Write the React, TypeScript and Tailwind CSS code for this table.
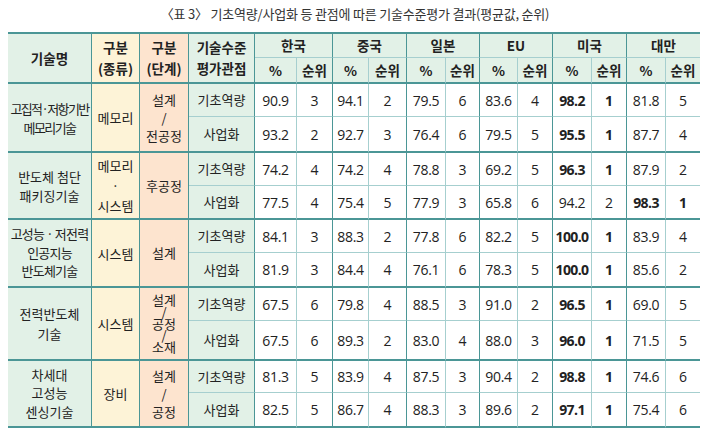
import React from "react";

type Group = {
  name: string[];
  nameClass: string;
  kind: string[];
  kindClass: string;
  stage: string[];
  stageClass: string;
  heights: [string, string];
  rows: [string, number][][];
};

const groups: Group[] = [
  {
    name: ["고집적·저항기반", "메모리기술"],
    nameClass: "leading-[19px] tracking-[-1.6px]",
    kind: ["메모리"],
    kindClass: "leading-[19px]",
    stage: ["설계", "/", "전공정"],
    stageClass: "leading-[18px]",
    heights: ["h-[33px]", "h-[36px]"],
    rows: [
      [["90.9", 3], ["94.1", 2], ["79.5", 6], ["83.6", 4], ["98.2", 1], ["81.8", 5]],
      [["93.2", 2], ["92.7", 3], ["76.4", 6], ["79.5", 5], ["95.5", 1], ["87.7", 4]],
    ],
  },
  {
    name: ["반도체 첨단", "패키징기술"],
    nameClass: "leading-[19px]",
    kind: ["메모리", "·", "시스템"],
    kindClass: "leading-[20px]",
    stage: ["후공정"],
    stageClass: "leading-[18px]",
    heights: ["h-[33px]", "h-[34px]"],
    rows: [
      [["74.2", 4], ["74.2", 4], ["78.8", 3], ["69.2", 5], ["96.3", 1], ["87.9", 2]],
      [["77.5", 4], ["75.4", 5], ["77.9", 3], ["65.8", 6], ["94.2", 2], ["98.3", 1]],
    ],
  },
  {
    name: ["고성능 · 저전력", "인공지능", "반도체기술"],
    nameClass: "leading-[18.5px] tracking-[-0.8px]",
    kind: ["시스템"],
    kindClass: "leading-[19px]",
    stage: ["설계"],
    stageClass: "leading-[18px]",
    heights: ["h-[33px]", "h-[35px]"],
    rows: [
      [["84.1", 3], ["88.3", 2], ["77.8", 6], ["82.2", 5], ["100.0", 1], ["83.9", 4]],
      [["81.9", 3], ["84.4", 4], ["76.1", 6], ["78.3", 5], ["100.0", 1], ["85.6", 2]],
    ],
  },
  {
    name: ["전력반도체", "기술"],
    nameClass: "leading-[20px]",
    kind: ["시스템"],
    kindClass: "leading-[19px]",
    stage: ["설계", "/", "공정", "/", "소재"],
    stageClass: "leading-[11.7px]",
    heights: ["h-[33px]", "h-[40px]"],
    rows: [
      [["67.5", 6], ["79.8", 4], ["88.5", 3], ["91.0", 2], ["96.5", 1], ["69.0", 5]],
      [["67.5", 6], ["89.3", 2], ["83.0", 4], ["88.0", 3], ["96.0", 1], ["71.5", 5]],
    ],
  },
  {
    name: ["차세대", "고성능", "센싱기술"],
    nameClass: "leading-[18.5px]",
    kind: ["장비"],
    kindClass: "leading-[19px]",
    stage: ["설계", "/", "공정"],
    stageClass: "leading-[18px]",
    heights: ["h-[32px]", "h-[35px]"],
    rows: [
      [["81.3", 5], ["83.9", 4], ["87.5", 3], ["90.4", 2], ["98.8", 1], ["74.6", 6]],
      [["82.5", 5], ["86.7", 4], ["88.3", 3], ["89.6", 2], ["97.1", 1], ["75.4", 6]],
    ],
  },
];

const countries = ["한국", "중국", "일본", "EU", "미국", "대만"];
const widths = [
  "w-[84px]", "w-[48px]", "w-[49px]", "w-[66px]",
  "w-[42px]", "w-[36px]", "w-[36px]", "w-[38px]", "w-[39px]", "w-[34px]",
  "w-[38px]", "w-[35px]", "w-[39px]", "w-[35px]", "w-[39px]", "w-[34px]",
];

function Lines({ lines }: { lines: string[] }) {
  return (
    <>
      {lines.map((l, i) => (
        <div key={i} className="whitespace-nowrap">
          {l}
        </div>
      ))}
    </>
  );
}

export default function App() {
  return (
    <div className="w-[710px] h-[436px] bg-white text-[#222] font-['Noto_Sans_CJK_KR',sans-serif] overflow-hidden">
      <div className="pt-[4px] h-[32px] text-center text-[13px] tracking-[-0.2px] text-[#333]">
        〈표 3〉 기초역량/사업화 등 관점에 따른 기술수준평가 결과(평균값, 순위)
      </div>
      <table className="ml-[8px] w-[692px] table-fixed border-separate border-spacing-0 border-t-2 border-[#4b9696] text-center">
        <colgroup>
          {widths.map((w, i) => (
            <col key={i} className={w} />
          ))}
        </colgroup>
        <thead>
          <tr className="h-[24px] text-[13.5px] font-bold">
            <th rowSpan={2} className="bg-[#e2f1e7] border-r border-b-2 border-[#4b9696] font-bold">
              기술명
            </th>
            <th rowSpan={2} className="bg-[#fdf3d7] border-r border-b-2 border-[#4b9696] font-bold leading-[21px]">
              <div>구분</div>
              <div>(종류)</div>
            </th>
            <th rowSpan={2} className="bg-[#fde4cf] border-r border-b-2 border-[#4b9696] font-bold leading-[21px]">
              <div>구분</div>
              <div>(단계)</div>
            </th>
            <th rowSpan={2} className="bg-[#e2f1e7] border-r border-b-2 border-[#4b9696] font-bold leading-[21px]">
              <div>기술수준</div>
              <div>평가관점</div>
            </th>
            {countries.map((c, i) => (
              <th
                key={c}
                colSpan={2}
                className={
                  i === countries.length - 1
                    ? "bg-[#e2f1e7] border-b border-[#a6cfcf] font-bold"
                    : "bg-[#e2f1e7] border-b border-r border-b-[#a6cfcf] border-r-[#4b9696] font-bold"
                }
              >
                {c}
              </th>
            ))}
          </tr>
          <tr className="h-[26px] text-[13.5px] font-bold">
            {countries.map((c, i) => (
              <React.Fragment key={c}>
                <th className="bg-[#e2f1e7] border-r border-b-2 border-r-[#a6cfcf] border-b-[#4b9696] font-bold">%</th>
                <th
                  className={
                    i === countries.length - 1
                      ? "bg-[#e2f1e7] border-b-2 border-[#4b9696] font-bold"
                      : "bg-[#e2f1e7] border-r border-b-2 border-[#4b9696] font-bold"
                  }
                >
                  순위
                </th>
              </React.Fragment>
            ))}
          </tr>
        </thead>
        <tbody>
          {groups.map((g, gi) =>
            g.rows.map((r, ri) => {
              const bottom =
                ri === 0
                  ? "border-b border-b-[#a6cfcf]"
                  : "border-b-2 border-b-[#4b9696]";
              return (
                <tr key={`${gi}-${ri}`} className={g.heights[ri]}>
                  {ri === 0 && (
                    <>
                      <td rowSpan={2} className={`bg-[#e2f1e7] border-r border-b-2 border-[#4b9696] text-[13px] ${g.nameClass}`}>
                        <Lines lines={g.name} />
                      </td>
                      <td rowSpan={2} className={`bg-[#fdf3d7] border-r border-b-2 border-[#4b9696] text-[13px] ${g.kindClass}`}>
                        <Lines lines={g.kind} />
                      </td>
                      <td rowSpan={2} className={`bg-[#fde4cf] border-r border-b-2 border-[#4b9696] text-[13px] ${g.stageClass}`}>
                        <Lines lines={g.stage} />
                      </td>
                    </>
                  )}
                  <td className={`bg-[#e2f1e7] border-r border-r-[#4b9696] text-[13px] ${bottom}`}>
                    {ri === 0 ? "기초역량" : "사업화"}
                  </td>
                  {r.map(([v, rank], ci) => {
                    const bold = rank === 1;
                    return (
                      <React.Fragment key={ci}>
                        <td
                          className={`border-r border-r-[#a6cfcf] text-[14px] font-['Open_Sans',sans-serif] ${bottom} ${
                            bold ? "font-bold tracking-[-0.6px]" : "tracking-[-0.3px]"
                          }`}
                        >
                          {v}
                        </td>
                        <td
                          className={`text-[14px] font-['Open_Sans',sans-serif] ${bottom} ${
                            ci === r.length - 1 ? "" : "border-r border-r-[#4b9696]"
                          } ${bold ? "font-bold" : ""}`}
                        >
                          {rank}
                        </td>
                      </React.Fragment>
                    );
                  })}
                </tr>
              );
            })
          )}
        </tbody>
      </table>
    </div>
  );
}
